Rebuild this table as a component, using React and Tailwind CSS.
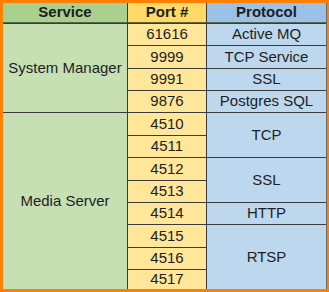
const SM_ROWS = [
  { port: '61616', proto: 'Active MQ' },
  { port: '9999', proto: 'TCP Service' },
  { port: '9991', proto: 'SSL' },
  { port: '9876', proto: 'Postgres SQL' },
];

const MEDIA_PORTS = ['4510', '4511', '4512', '4513', '4514', '4515', '4516', '4517'];

// protocol spans for media server rows (start row is 1-based grid line)
const MEDIA_PROTOS = [
  { label: 'TCP', row: 'row-start-6 row-span-2' },
  { label: 'SSL', row: 'row-start-8 row-span-2' },
  { label: 'HTTP', row: 'row-start-10 row-span-1' },
  { label: 'RTSP', row: 'row-start-11 row-span-3' },
];

const PORT_ROWS = [
  'row-start-2', 'row-start-3', 'row-start-4', 'row-start-5', 'row-start-6', 'row-start-7',
  'row-start-8', 'row-start-9', 'row-start-10', 'row-start-11', 'row-start-12', 'row-start-13',
];

const cell = 'flex items-center justify-center text-[15px] text-[#1e1e1e]';

export default function App() {
  const ports = [...SM_ROWS.map((r) => r.port), ...MEDIA_PORTS];

  return (
    <div
      className="w-[329px] h-[292px] bg-[#ff8000] border-l-[3px] border-t-[3px] border-b-[3px] border-r-[2px] border-[#ff8000]"
      style={{ fontFamily: '"Liberation Sans", Arial, sans-serif' }}
    >
      <div className="grid grid-cols-[124px_78px_119px] grid-rows-[20px_21px_22px_21px_21px_22px_21px_22px_21px_21px_22px_21px_19px] gap-px bg-[#3a3a3a] border-r border-[#6b6b6b]">
        {/* header */}
        <div className={`${cell} col-start-1 row-start-1 bg-[#a9d08e] font-bold border-b border-[#55694a]`}>Service</div>
        <div className={`${cell} col-start-2 row-start-1 bg-[#ffd966] font-bold border-b border-[#55694a]`}>Port #</div>
        <div className={`${cell} col-start-3 row-start-1 bg-[#9bc2e6] font-bold border-b border-[#55694a]`}>Protocol</div>

        {/* service column */}
        <div className={`${cell} col-start-1 row-start-2 row-span-4 bg-[#c6e0b4]`}>System Manager</div>
        <div className={`${cell} col-start-1 row-start-6 row-span-8 bg-[#c6e0b4]`}>Media Server</div>

        {/* ports */}
        {ports.map((p, i) => (
          <div key={p} className={`${cell} col-start-2 ${PORT_ROWS[i]} bg-[#ffe699]`}>{p}</div>
        ))}

        {/* protocols */}
        {SM_ROWS.map((r, i) => (
          <div key={r.proto} className={`${cell} col-start-3 ${PORT_ROWS[i]} bg-[#bdd7ee]`}>{r.proto}</div>
        ))}
        {MEDIA_PROTOS.map((m) => (
          <div key={m.label} className={`${cell} col-start-3 ${m.row} bg-[#bdd7ee]`}>{m.label}</div>
        ))}
      </div>
    </div>
  );
}
